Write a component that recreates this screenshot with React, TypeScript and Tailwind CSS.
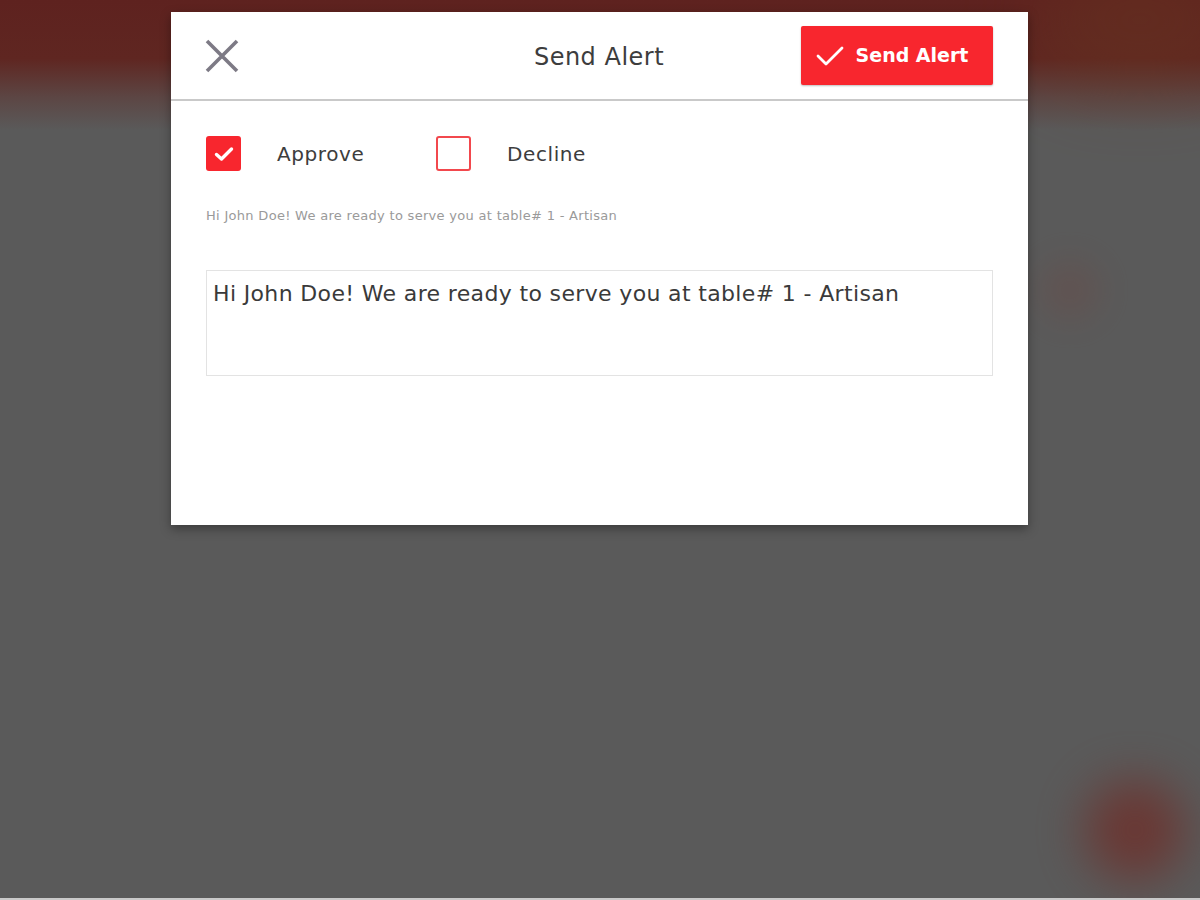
import React from "react";

export default function App() {
  return (
    <div
      className="relative h-[900px] w-[1200px] overflow-hidden bg-[#5a5a5a]"
      style={{ fontFamily: '"DejaVu Sans", "Open Sans", sans-serif' }}
    >
      {/* background app bar (blurred) */}
      <div className="absolute left-0 top-0 h-[130px] w-full [background-image:linear-gradient(to_bottom,#5e221f_0%,#5f2621_45%,#5c4644_75%,#5a5a5a_100%)]" />
      <div className="absolute right-[-40px] top-[-40px] h-[120px] w-[200px] rounded-full bg-[#6a3a20] opacity-40 blur-2xl" />
      {/* blurred floating action button */}
      <div className="absolute left-[1085px] top-[780px] h-[100px] w-[100px] rounded-full bg-[#6e2f2a] opacity-80 blur-xl" />
      <div className="absolute left-[1040px] top-[260px] h-[60px] w-[60px] rounded-full bg-[#6a4a46] opacity-40 blur-lg" />
      <div className="absolute bottom-0 left-0 h-[2px] w-full bg-[#c9c9c9]" />

      <div className="relative flex justify-center pt-[12px] pr-[1px]">
        <div className="flex h-[513px] w-[857px] flex-col bg-white shadow-[0_4px_10px_rgba(0,0,0,0.35)]">
          {/* header */}
          <div className="flex h-[89px] shrink-0 items-center border-b-2 border-[#c9c9c9] pl-[34px] pr-[35px]">
            <div className="flex w-[192px]">
              <button className="flex h-[34px] w-[34px] items-center justify-center">
                <svg width="34" height="34" viewBox="0 0 34 34">
                  <path
                    d="M2 2 L32 32 M32 2 L2 32"
                    stroke="#7d7a85"
                    strokeWidth="3.6"
                    strokeLinecap="butt"
                  />
                </svg>
              </button>
            </div>
            <div className="flex-1 pt-[2px] text-center text-[24px] tracking-[0.5px] text-[#3d3d3d]">Send Alert</div>
            <button className="flex h-[59px] w-[192px] items-center justify-center gap-[12px] rounded-[2px] bg-[#f8262e] text-[19px] font-semibold text-white shadow-[0_1px_2px_rgba(0,0,0,0.25)]">
              <svg width="28" height="22" viewBox="0 0 28 22" className="-ml-[10px]">
                <path
                  d="M2 11 L10 19 L26 3"
                  fill="none"
                  stroke="white"
                  strokeWidth="2.8"
                  strokeLinecap="round"
                  strokeLinejoin="round"
                />
              </svg>
              <span>Send Alert</span>
            </button>
          </div>

          {/* body */}
          <div className="flex flex-col px-[35px] pt-[35px]">
            <div className="flex items-center">
              <div className="flex w-[230px] items-center">
                <div className="flex h-[35px] w-[35px] items-center justify-center rounded-[3px] bg-[#f8262e]">
                  <svg width="20" height="16" viewBox="0 0 20 16">
                    <path
                      d="M2.5 8.5 L7.5 13 L17.5 3"
                      fill="none"
                      stroke="white"
                      strokeWidth="3.4"
                      strokeLinecap="round"
                      strokeLinejoin="round"
                    />
                  </svg>
                </div>
                <span className="ml-[36px] text-[20px] tracking-[0.6px] text-[#3d3d3d]">Approve</span>
              </div>
              <div className="flex items-center">
                <div className="h-[35px] w-[35px] rounded-[3px] border-2 border-[#f2484d] bg-white" />
                <span className="ml-[36px] text-[20px] tracking-[0.6px] text-[#3d3d3d]">Decline</span>
              </div>
            </div>

            <div className="mt-[35px] text-[13px] tracking-[0.3px] text-[#9a9a9a]">
              Hi John Doe! We are ready to serve you at table# 1 - Artisan
            </div>

            <div className="mt-[44px] h-[106px] w-full border border-[#e3e3e3] px-[6px] pt-[7px] text-[22px] leading-[32px] tracking-[0.35px] text-[#3a3a3a]">
              Hi John Doe! We are ready to serve you at table# 1 - Artisan
            </div>
          </div>
        </div>
      </div>
    </div>
  );
}
